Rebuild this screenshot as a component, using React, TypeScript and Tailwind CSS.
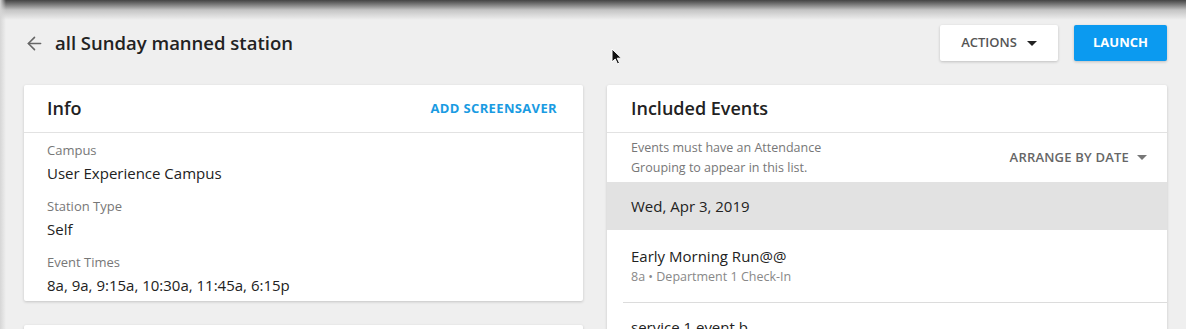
import { ArrowLeft } from 'lucide-react'

function Caret({ className }: { className?: string }) {
  return (
    <svg viewBox="0 0 10 5" className={className} fill="currentColor">
      <path d="M0 0h10L5 5z" />
    </svg>
  )
}

function Field({ label, value }: { label: string; value: string }) {
  return (
    <div className="h-[56px] pt-[9px]">
      <p className="text-[13px] leading-[16px] text-[#777]">{label}</p>
      <p className="mt-[6px] text-[15px] leading-[18px] text-[#222]">{value}</p>
    </div>
  )
}

export default function App() {
  return (
    <div
      className="relative h-[329px] w-[1186px] overflow-hidden bg-[#efefef] text-[#222]"
      style={{ fontFamily: '"Open Sans", "Liberation Sans", sans-serif' }}
    >
      {/* top shade */}
      <div className="pointer-events-none absolute inset-x-0 top-0 h-[20px] bg-gradient-to-b from-[#444] via-[#c4c4c4] to-transparent" />
      <div className="pointer-events-none absolute inset-y-0 left-0 w-[6px] bg-gradient-to-r from-[#d6d6d6] to-transparent" />

      <header className="flex h-[85px] items-start pl-[24px] pr-[19px] pt-[25px]">
        <div className="flex h-[36px] items-center gap-[10px]">
          <ArrowLeft className="h-[21px] w-[21px] text-[#666]" strokeWidth={1.8} />
          <h1 className="text-[18.5px] font-semibold text-[#222]">all Sunday manned station</h1>
        </div>
        <div className="ml-auto flex gap-[16px]">
          <button
            type="button"
            className="flex h-[36px] w-[118px] items-center justify-center gap-[10px] rounded-[2px] bg-white text-[13px] font-semibold text-[#555] shadow-[0_1px_3px_rgba(0,0,0,0.2)]"
          >
            ACTIONS
            <Caret className="h-[5px] w-[10px] text-[#222]" />
          </button>
          <button
            type="button"
            className="flex h-[36px] w-[93px] items-center justify-center rounded-[2px] bg-[#0b9af0] text-[13px] font-bold text-white shadow-[0_1px_3px_rgba(0,0,0,0.2)]"
          >
            LAUNCH
          </button>
        </div>
      </header>

      <div className="flex gap-[24px] pl-[24px] pr-[19px]">
        <div className="flex w-[559px] flex-col gap-[24px]">
          <section className="rounded-[2px] bg-white shadow-[0_1px_3px_rgba(0,0,0,0.18)]">
            <div className="flex h-[48px] items-center justify-between border-b border-[#e2e2e2] px-[23px] pr-[26px]">
              <h2 className="text-[18px] font-semibold">Info</h2>
              <span className="text-[13px] font-bold tracking-[0.35px] text-[#1a9be2]">ADD SCREENSAVER</span>
            </div>
            <div className="px-[23px]">
              <Field label="Campus" value="User Experience Campus" />
              <Field label="Station Type" value="Self" />
              <Field label="Event Times" value="8a, 9a, 9:15a, 10:30a, 11:45a, 6:15p" />
            </div>
          </section>
          <section className="h-[60px] rounded-[2px] bg-white shadow-[0_1px_3px_rgba(0,0,0,0.18)]" />
        </div>

        <section className="flex-1 rounded-[2px] bg-white shadow-[0_1px_3px_rgba(0,0,0,0.18)]">
          <div className="flex h-[48px] items-center border-b border-[#e2e2e2] px-[24px]">
            <h2 className="text-[18px] font-semibold">Included Events</h2>
          </div>
          <div className="flex h-[49px] items-center justify-between px-[24px] pr-[20px]">
            <p className="text-[12.5px] leading-[20px] text-[#777]">
              Events must have an Attendance
              <br />
              Grouping to appear in this list.
            </p>
            <span className="flex items-center gap-[8px] text-[13px] font-semibold tracking-[0.2px] text-[#666]">
              ARRANGE BY DATE
              <Caret className="h-[5px] w-[10px] text-[#777]" />
            </span>
          </div>
          <div className="flex h-[48px] items-center bg-[#e2e2e2] px-[24px] text-[15px]">Wed, Apr 3, 2019</div>
          <div className="ml-[16px] h-[73px] border-b border-[#dcdcdc] pl-[8px] pt-[16px]">
            <p className="text-[15px] leading-[20px]">Early Morning Run@@</p>
            <p className="mt-[3px] text-[12.5px] leading-[16px] text-[#888]">8a • Department 1 Check-In</p>
          </div>
          <div className="ml-[16px] pl-[8px] pt-[14px]">
            <p className="text-[15px] leading-[20px]">service 1 event b</p>
          </div>
        </section>
      </div>

      {/* mouse cursor */}
      <svg className="absolute left-[611px] top-[48px] h-[18px] w-[12px]" viewBox="0 0 12 18">
        <path d="M1 1v13l3.2-3 2.3 5 2-1-2.3-4.8H10.5z" fill="#111" stroke="#fff" strokeWidth="1" />
      </svg>
    </div>
  )
}
